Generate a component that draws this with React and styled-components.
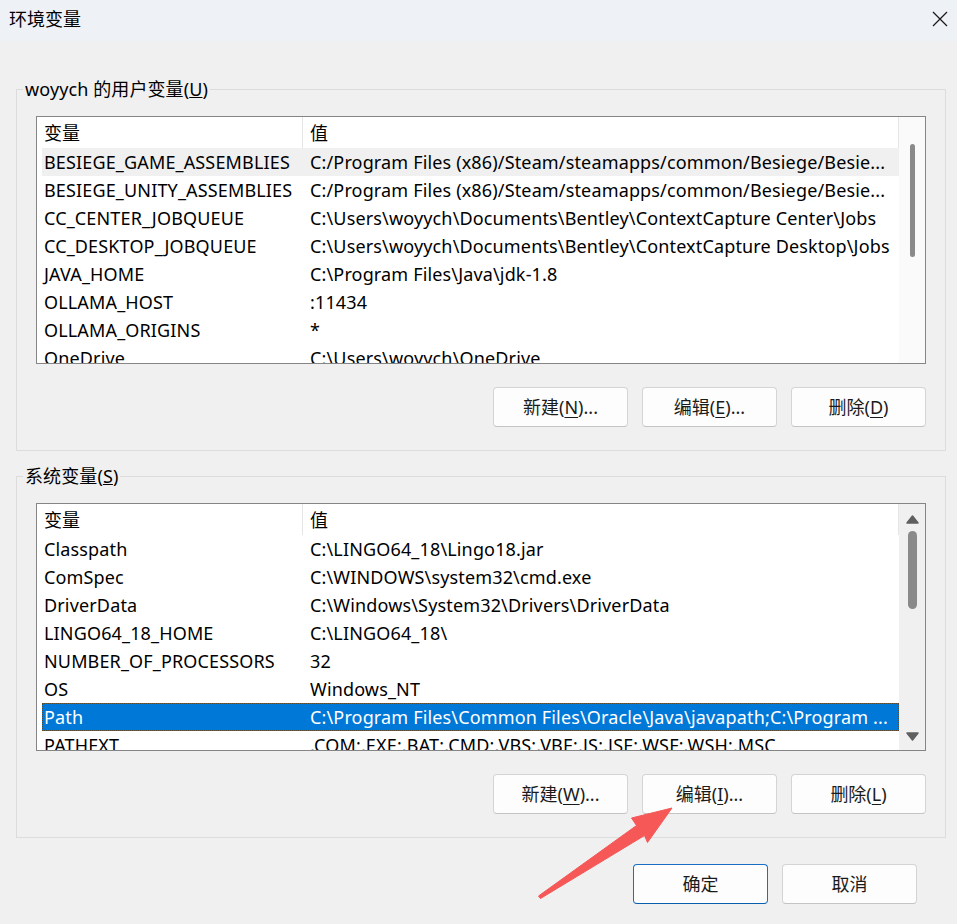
import React from "react";
import styled, { createGlobalStyle, css } from "styled-components";

const GlobalStyle = createGlobalStyle`
  html, body {
    margin: 0;
    padding: 0;
    background: #f0f0f0;
  }
  body {
    font-family: "Noto Sans", "Noto Sans CJK SC", sans-serif;
    font-size: 18px;
    color: #000;
  }
  * {
    box-sizing: border-box;
  }
`;

const Window = styled.div`
  position: relative;
  width: 957px;
  height: 924px;
  background: #f0f0f0;
  overflow: hidden;
`;

const TitleBar = styled.div`
  height: 41px;
  background: #eef2f7;
  display: flex;
  align-items: center;
  justify-content: space-between;
  padding: 0 9px 3px 9px;
`;

const Title = styled.span`
  font-size: 18px;
  line-height: 24px;
`;

const Body = styled.div`
  padding: 36px 11px 0 16px;
  display: flex;
  flex-direction: column;
  gap: 13px;
`;

const Group = styled.fieldset`
  margin: 0;
  min-width: 0;
  border: 1px solid #dcdcdc;
  padding: 15px 19px 23px 19px;
`;

const Legend = styled.legend`
  margin-left: -13px;
  padding: 0 2px;
  font-size: 18px;
  line-height: 24px;
  letter-spacing: 0.1px;
`;

const ListBox = styled.div`
  height: 248px;
  border: 1px solid #858585;
  background: #fff;
  display: flex;
  overflow: hidden;
`;

const ListBody = styled.div`
  flex: 1;
  min-width: 0;
  padding-left: 5px;
`;

const Columns = styled.div`
  display: grid;
  grid-template-columns: 261px 1fr;
  white-space: nowrap;
`;

const HeaderRow = styled(Columns)`
  height: 31px;
  margin-left: -5px;
  padding-left: 5px;
`;

const HeaderCell = styled.div`
  display: flex;
  align-items: center;
  padding-left: ${(p) => (p.$value ? "7px" : "2px")};
  border-right: 1px solid #e5e5e5;
  line-height: 24px;
`;

const Row = styled(Columns)`
  height: 28px;
  align-items: center;
  line-height: 24px;
  letter-spacing: 0.15px;
  ${(p) =>
    p.$hover &&
    css`
      background: #f0f0f0;
    `}
  ${(p) =>
    p.$selected &&
    css`
      background: #0078d7;
      color: #fff;
      outline: 1px dotted #5a4a30;
      outline-offset: -1px;
    `}
`;

const Cell = styled.div`
  overflow: hidden;
  padding-left: ${(p) => (p.$value ? "7px" : "2px")};
`;

const ScrollTrack = styled.div`
  flex: none;
  width: 26px;
  display: flex;
  flex-direction: column;
  align-items: center;
  background: ${(p) => (p.$active ? "#f0f0f0" : "#fafafa")};
  padding: ${(p) => (p.$active ? "11px 0 9px" : "0")};
`;

const Thumb = styled.div`
  width: ${(p) => (p.$active ? "9px" : "5px")};
  height: ${(p) => p.$height}px;
  margin-top: ${(p) => p.$top}px;
  border-radius: 5px;
  background: #8a8a8a;
`;

const Spacer = styled.div`
  flex: 1;
`;

const ButtonRow = styled.div`
  display: flex;
  justify-content: flex-end;
  gap: 14px;
  margin-top: 23px;
`;

const Button = styled.button`
  width: 135px;
  height: 40px;
  padding: 0;
  display: flex;
  align-items: center;
  justify-content: center;
  background: #fdfdfd;
  border: 1px solid #d4d4d4;
  border-bottom-color: #c4c4c4;
  border-radius: 4px;
  font-family: inherit;
  font-size: 18px;
  line-height: 24px;
  color: #1b1b1b;
  ${(p) =>
    p.$primary &&
    css`
      border-color: #1a6fc4;
      border-bottom-color: #0a5cae;
    `}

  u {
    text-underline-offset: 3px;
    text-decoration-thickness: 1px;
  }
`;

const Footer = styled.div`
  display: flex;
  justify-content: flex-end;
  gap: 14px;
  padding-right: 40px;
  margin-top: 26px;
`;

const Overlay = styled.svg`
  position: absolute;
  left: 0;
  top: 0;
  pointer-events: none;
`;

const userVars = [
  ["BESIEGE_GAME_ASSEMBLIES", "C:/Program Files (x86)/Steam/steamapps/common/Besiege/Besie...", "hover"],
  ["BESIEGE_UNITY_ASSEMBLIES", "C:/Program Files (x86)/Steam/steamapps/common/Besiege/Besie..."],
  ["CC_CENTER_JOBQUEUE", "C:\\Users\\woyych\\Documents\\Bentley\\ContextCapture Center\\Jobs"],
  ["CC_DESKTOP_JOBQUEUE", "C:\\Users\\woyych\\Documents\\Bentley\\ContextCapture Desktop\\Jobs"],
  ["JAVA_HOME", "C:\\Program Files\\Java\\jdk-1.8"],
  ["OLLAMA_HOST", ":11434"],
  ["OLLAMA_ORIGINS", "*"],
  ["OneDrive", "C:\\Users\\woyych\\OneDrive"],
];

const systemVars = [
  ["Classpath", "C:\\LINGO64_18\\Lingo18.jar"],
  ["ComSpec", "C:\\WINDOWS\\system32\\cmd.exe"],
  ["DriverData", "C:\\Windows\\System32\\Drivers\\DriverData"],
  ["LINGO64_18_HOME", "C:\\LINGO64_18\\"],
  ["NUMBER_OF_PROCESSORS", "32"],
  ["OS", "Windows_NT"],
  ["Path", "C:\\Program Files\\Common Files\\Oracle\\Java\\javapath;C:\\Program ...", "selected"],
  ["PATHEXT", ".COM;.EXE;.BAT;.CMD;.VBS;.VBE;.JS;.JSE;.WSF;.WSH;.MSC"],
];

function CloseIcon() {
  return (
    <svg width="16" height="16" viewBox="0 0 16 16">
      <path d="M1 1 L15 15 M15 1 L1 15" stroke="#1a1a1a" strokeWidth="1.3" fill="none" />
    </svg>
  );
}

function Arrow({ down }) {
  return (
    <svg width="13" height="9" viewBox="0 0 13 9">
      <polygon
        points={down ? "1,1 12,1 6.5,8" : "6.5,1 12,8 1,8"}
        fill="#5f5f5f"
        stroke="#5f5f5f"
        strokeWidth="1.5"
        strokeLinejoin="round"
      />
    </svg>
  );
}

function Label({ text, hotkey }) {
  // text like "新建(%)..." where % is the underlined access key
  const [before, after] = text.split("%");
  return (
    <span>
      {before}
      <u>{hotkey}</u>
      {after}
    </span>
  );
}

function VarList({ rows, active, thumbTop, thumbHeight }) {
  return (
    <ListBox>
      <ListBody>
        <HeaderRow>
          <HeaderCell>变量</HeaderCell>
          <HeaderCell $value>值</HeaderCell>
        </HeaderRow>
        {rows.map(([name, value, state]) => (
          <Row key={name} $hover={state === "hover"} $selected={state === "selected"}>
            <Cell>{name}</Cell>
            <Cell $value>{value}</Cell>
          </Row>
        ))}
      </ListBody>
      <ScrollTrack $active={active}>
        {active && <Arrow />}
        <Thumb $active={active} $top={thumbTop} $height={thumbHeight} />
        <Spacer />
        {active && <Arrow down />}
      </ScrollTrack>
    </ListBox>
  );
}

export default function App() {
  return (
    <>
      <GlobalStyle />
      <Window>
        <TitleBar>
          <Title>环境变量</Title>
          <CloseIcon />
        </TitleBar>
        <Body>
          <Group>
            <Legend>
              woyych 的用户变量(<u>U</u>)
            </Legend>
            <VarList rows={userVars} thumbTop={27} thumbHeight={113} />
            <ButtonRow>
              <Button>
                <Label text="新建(%)..." hotkey="N" />
              </Button>
              <Button>
                <Label text="编辑(%)..." hotkey="E" />
              </Button>
              <Button>
                <Label text="删除(%)" hotkey="D" />
              </Button>
            </ButtonRow>
          </Group>
          <Group>
            <Legend>
              系统变量(<u>S</u>)
            </Legend>
            <VarList rows={systemVars} active thumbTop={7} thumbHeight={78} />
            <ButtonRow>
              <Button>
                <Label text="新建(%)..." hotkey="W" />
              </Button>
              <Button>
                <Label text="编辑(%)..." hotkey="I" />
              </Button>
              <Button>
                <Label text="删除(%)" hotkey="L" />
              </Button>
            </ButtonRow>
          </Group>
        </Body>
        <Footer>
          <Button $primary>确定</Button>
          <Button>取消</Button>
        </Footer>
        <Overlay width="957" height="924" viewBox="0 0 957 924">
          <polygon
            points="538.5,896 636.5,825.5 631.5,818 672,808 647.5,842.5 644.5,835.5 540.5,898.5"
            fill="#f65757"
            stroke="#f65757"
            strokeWidth="1"
            strokeLinejoin="round"
          />
        </Overlay>
      </Window>
    </>
  );
}
